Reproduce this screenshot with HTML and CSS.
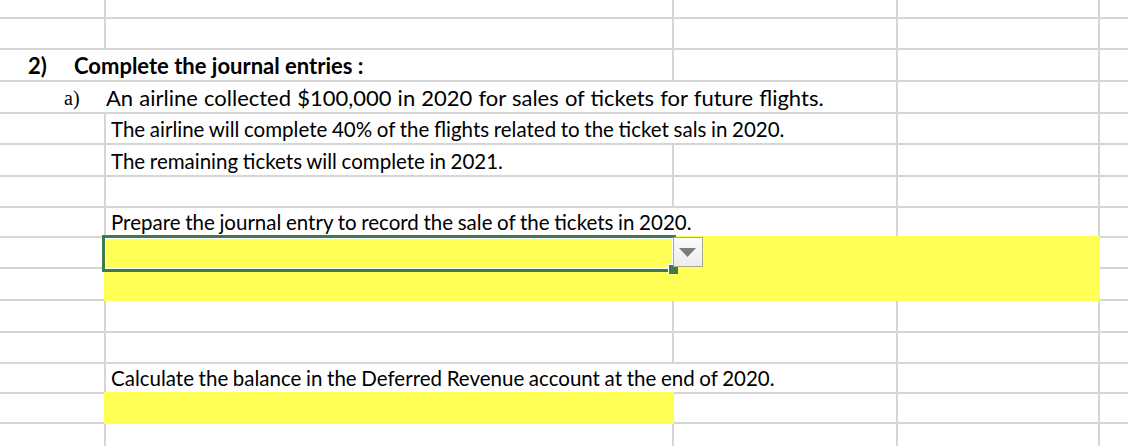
FILE: index.html
```html
<!DOCTYPE html>
<html lang="en">
<head>
<meta charset="utf-8">
<title>Journal entries</title>
<link rel="stylesheet" href="styles.css">
</head>
<body>
<div class="sheet">
  <!-- row 0 -->
  <div class="c"></div><div class="c"></div><div class="c"></div><div class="c"></div><div class="c"></div>
  <!-- row 1 -->
  <div class="c"></div><div class="c"></div><div class="c"></div><div class="c"></div><div class="c"></div>
  <!-- row 2 -->
  <div class="c span2 heading"><span class="num">2)</span><span>Complete the journal entries :</span></div>
  <div class="c"></div><div class="c"></div><div class="c"></div>
  <!-- row 3 -->
  <div class="c span3 item"><span class="letter">a)</span><span>An airline collected $100,000 in 2020 for sales of tickets for future flights.</span></div>
  <div class="c"></div><div class="c"></div>
  <!-- row 4 -->
  <div class="c"></div>
  <div class="c span2 txt">The airline will complete 40% of the flights related to the ticket sals in 2020.</div>
  <div class="c"></div><div class="c"></div>
  <!-- row 5 -->
  <div class="c"></div>
  <div class="c txt">The remaining tickets will complete in 2021.</div>
  <div class="c"></div><div class="c"></div><div class="c"></div>
  <!-- row 6 -->
  <div class="c"></div><div class="c"></div><div class="c"></div><div class="c"></div><div class="c"></div>
  <!-- row 7 -->
  <div class="c"></div>
  <div class="c span2 txt">Prepare the journal entry to record the sale of the tickets in 2020.</div>
  <div class="c"></div><div class="c"></div>
  <!-- rows 8-9 -->
  <div class="c"></div>
  <div class="c span3 rows2 fill answer">
    <div class="selection"><span class="handle"></span></div>
    <div class="dropdown">
      <svg width="30" height="30" viewBox="0 0 30 30" aria-hidden="true"><polygon points="6,11 23,11 14.5,20" fill="#7d7d7d"/></svg>
    </div>
  </div>
  <div class="c"></div>
  <div class="c"></div>
  <div class="c"></div>
  <!-- row 10 -->
  <div class="c"></div><div class="c"></div><div class="c"></div><div class="c"></div><div class="c"></div>
  <!-- row 11 -->
  <div class="c"></div><div class="c"></div><div class="c"></div><div class="c"></div><div class="c"></div>
  <!-- row 12 -->
  <div class="c"></div>
  <div class="c span2 txt">Calculate the balance in the Deferred Revenue account at the end of 2020.</div>
  <div class="c"></div><div class="c"></div>
  <!-- row 13 -->
  <div class="c"></div>
  <div class="c fill"></div>
  <div class="c"></div><div class="c"></div><div class="c"></div>
  <!-- row 14 -->
  <div class="c"></div><div class="c"></div><div class="c"></div><div class="c"></div><div class="c"></div>
</div>
</body>
</html>
```
FILE: styles.css
```css
html, body {
  margin: 0;
  padding: 0;
  background: #ffffff;
}

.sheet {
  width: 1128px;
  height: 446px;
  overflow: hidden;
  display: grid;
  grid-template-columns: 104px 566px 222px 200px 28px;
  grid-template-rows: 17px 29px 30px 30px 29px 30px 29px 28px 29px 30px 30px 29px 28px 28px 22px;
  gap: 2px;
  background: #d6d6d6;
  font-family: "Lato", "Liberation Sans", sans-serif;
  font-size: 20.5px;
  color: #000000;
}

.c {
  background: #ffffff;
  display: flex;
  align-items: flex-end;
  padding-bottom: 4px;
  line-height: 20px;
  white-space: nowrap;
  min-width: 0;
  box-sizing: border-box;
}

.span2 { grid-column: span 2; }
.span3 { grid-column: span 3; }
.rows2 { grid-row: span 2; }

.heading {
  font-weight: 700;
  font-size: 22px;
  padding-left: 28px;
}

.heading .num {
  width: 46px;
}

.item {
  padding-left: 64px;
  font-size: 22px;
  word-spacing: 0.5px;
}

.item .letter {
  width: 42px;
  font-family: "Liberation Serif", serif;
  font-size: 20px;
  word-spacing: 0;
}

.txt {
  padding-left: 5px;
  word-spacing: -0.6px;
}

.fill {
  background: #ffff55;
  box-shadow: 0 0 0 2px #ffff55;
}

.answer {
  position: relative;
  padding: 0;
}

.selection {
  position: absolute;
  left: -4px;
  top: -3px;
  width: 574px;
  height: 37px;
  box-sizing: border-box;
  border: 3px solid #3e7a4e;
  box-shadow: inset 0 0 0 1px #ffffff;
}

.handle {
  position: absolute;
  right: -5px;
  bottom: -5px;
  width: 10px;
  height: 10px;
  box-sizing: border-box;
  background: #3e7a4e;
  border-top: 1px solid #ffffff;
  border-left: 1px solid #ffffff;
}

.dropdown {
  position: absolute;
  left: 567px;
  top: -1px;
  width: 30px;
  height: 30px;
  box-sizing: border-box;
  border: 1px solid #a9a98c;
  background: linear-gradient(#fbfbfb, #ededed);
}

.dropdown svg {
  position: absolute;
  left: -1px;
  top: -1px;
}
```
